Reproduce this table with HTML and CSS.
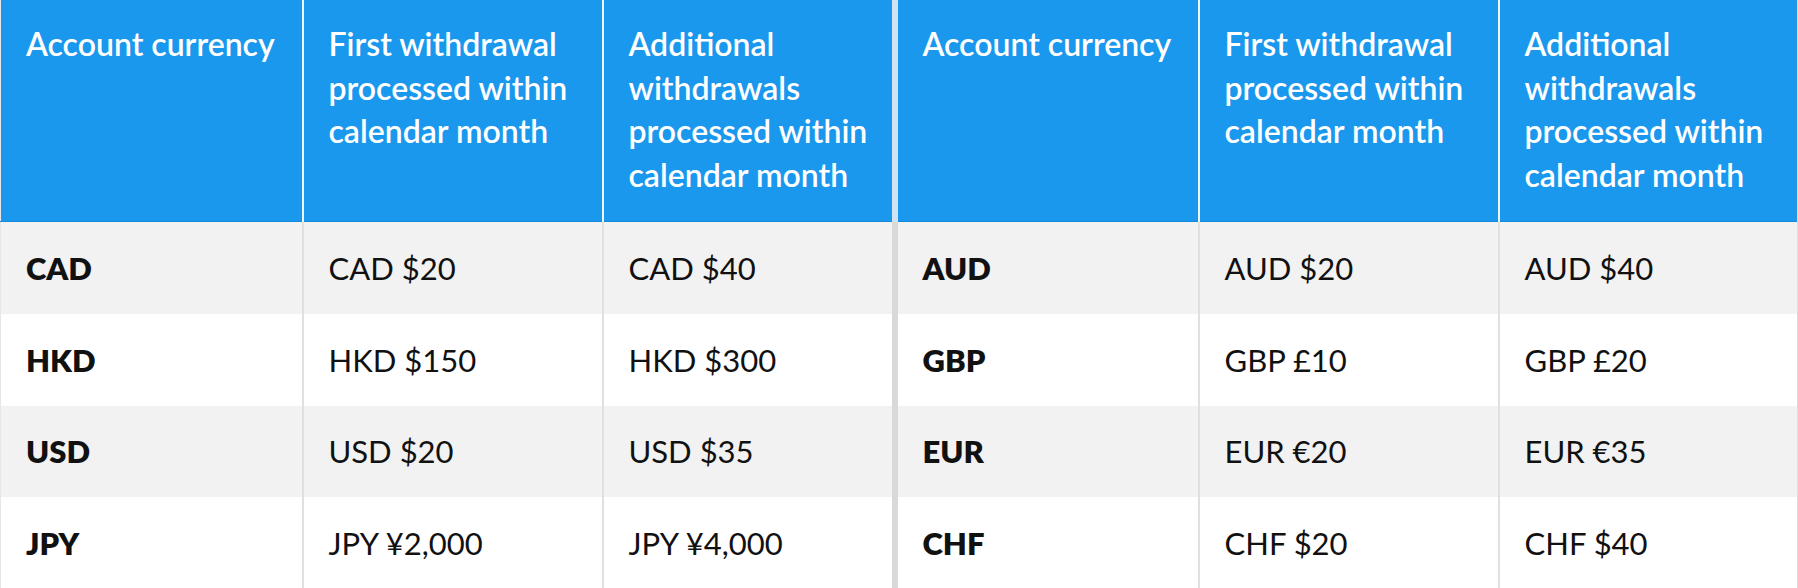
FILE: index.html
```html
<!DOCTYPE html>
<html lang="en">
<head>
<meta charset="utf-8">
<title>Withdrawal fees</title>
<link rel="stylesheet" href="styles.css">
</head>
<body>
<table class="fees">
  <colgroup>
    <col class="c1"><col class="c2"><col class="c3"><col class="c4"><col class="c5"><col class="c6">
  </colgroup>
  <thead>
    <tr>
      <th>Account currency</th>
      <th>First withdrawal processed within calendar month</th>
      <th class="split">Additional withdrawals processed within calendar month</th>
      <th>Account currency</th>
      <th>First withdrawal processed within calendar month</th>
      <th>Additional withdrawals processed within calendar month</th>
    </tr>
  </thead>
  <tbody>
    <tr>
      <td class="cur">CAD</td><td>CAD $20</td><td class="split">CAD $40</td>
      <td class="cur">AUD</td><td>AUD $20</td><td>AUD $40</td>
    </tr>
    <tr>
      <td class="cur">HKD</td><td>HKD $150</td><td class="split">HKD $300</td>
      <td class="cur">GBP</td><td>GBP £10</td><td>GBP £20</td>
    </tr>
    <tr>
      <td class="cur">USD</td><td>USD $20</td><td class="split">USD $35</td>
      <td class="cur">EUR</td><td>EUR €20</td><td>EUR €35</td>
    </tr>
    <tr>
      <td class="cur">JPY</td><td>JPY ¥2,000</td><td class="split">JPY ¥4,000</td>
      <td class="cur">CHF</td><td>CHF $20</td><td>CHF $40</td>
    </tr>
  </tbody>
</table>
</body>
</html>
```
FILE: styles.css
```css
html, body {
  margin: 0;
  padding: 0;
  background: #ffffff;
}

.fees {
  width: 1798px;
  table-layout: fixed;
  border-collapse: collapse;
  font-family: "Lato", "Noto Sans", sans-serif;
  color: #111111;
  border-left: 1px solid #e6e6e6;
  border-right: 3px solid #dddddd;
}

.c1 { width: 302px; }
.c2 { width: 300px; }
.c3 { width: 292px; }
.c4 { width: 304px; }
.c5 { width: 300px; }
.c6 { width: 300px; }

.fees th {
  background: #1a98ee;
  color: #ffffff;
  font-size: 32px;
  font-weight: 600;
  line-height: 43.6px;
  text-align: left;
  vertical-align: top;
  padding: 22px 12px 0 25px;
  height: 199px;
  border-right: 2px solid #eef6fc;
  border-bottom: 1px solid #168ad9;
}

.fees td {
  font-size: 31px;
  font-weight: 400;
  line-height: 36px;
  height: 91.75px;
  padding: 0 12px 0 25px;
  vertical-align: middle;
  border-right: 2px solid #e0e0e0;
}

.fees tbody tr:nth-child(odd) td {
  background: #f2f2f2;
}

.fees tbody tr:nth-child(even) td {
  background: #ffffff;
}

.fees .cur {
  font-weight: 800;
}

.fees th.split,
.fees td.split {
  border-right: 6px solid #d9d9d9;
}

.fees th.split {
  border-right-color: #cfe3f2;
}
```
